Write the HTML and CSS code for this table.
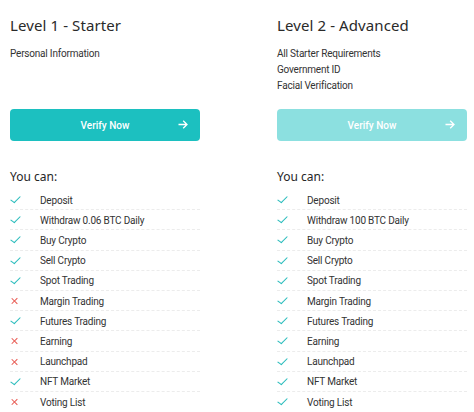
FILE: index.html
```html
<!DOCTYPE html>
<html>
<head>
<meta charset="utf-8">
<link rel="stylesheet" href="styles.css">
</head>
<body>
<div class="page">
  <section class="level">
    <h2 class="title">Level 1 - Starter</h2>
    <ul class="reqs">
      <li>Personal Information</li>
    </ul>
    <button class="verify">Verify Now
      <svg class="arrow" width="10" height="9" viewBox="0 0 10 9"><path d="M0.5 4.5H9M5.2 0.8L9 4.5L5.2 8.2" fill="none" stroke="#fff" stroke-width="1.3"/></svg>
    </button>
    <div class="can">You can:</div>
    <ul class="perms">
      <li><span class="ic ok"></span>Deposit</li>
      <li><span class="ic ok"></span>Withdraw 0.06 BTC Daily</li>
      <li><span class="ic ok"></span>Buy Crypto</li>
      <li><span class="ic ok"></span>Sell Crypto</li>
      <li><span class="ic ok"></span>Spot Trading</li>
      <li><span class="ic no"></span>Margin Trading</li>
      <li><span class="ic ok"></span>Futures Trading</li>
      <li><span class="ic no"></span>Earning</li>
      <li><span class="ic no"></span>Launchpad</li>
      <li><span class="ic ok"></span>NFT Market</li>
      <li><span class="ic no"></span>Voting List</li>
    </ul>
  </section>
  <section class="level">
    <h2 class="title">Level 2 - Advanced</h2>
    <ul class="reqs">
      <li>All Starter Requirements</li>
      <li>Government ID</li>
      <li>Facial Verification</li>
    </ul>
    <button class="verify disabled">Verify Now
      <svg class="arrow" width="10" height="9" viewBox="0 0 10 9"><path d="M0.5 4.5H9M5.2 0.8L9 4.5L5.2 8.2" fill="none" stroke="#fff" stroke-width="1.3"/></svg>
    </button>
    <div class="can">You can:</div>
    <ul class="perms">
      <li><span class="ic ok"></span>Deposit</li>
      <li><span class="ic ok"></span>Withdraw 100 BTC Daily</li>
      <li><span class="ic ok"></span>Buy Crypto</li>
      <li><span class="ic ok"></span>Sell Crypto</li>
      <li><span class="ic ok"></span>Spot Trading</li>
      <li><span class="ic ok"></span>Margin Trading</li>
      <li><span class="ic ok"></span>Futures Trading</li>
      <li><span class="ic ok"></span>Earning</li>
      <li><span class="ic ok"></span>Launchpad</li>
      <li><span class="ic ok"></span>NFT Market</li>
      <li><span class="ic ok"></span>Voting List</li>
    </ul>
  </section>
</div>
</body>
</html>
```
FILE: styles.css
```css
* { box-sizing: border-box; }
html, body { margin: 0; padding: 0; background: #fff; }
body { font-family: Roboto, "Noto Sans", sans-serif; color: #2c2c2c; }
.page {
  display: grid;
  grid-template-columns: 190px 190px;
  column-gap: 77px;
  padding: 15px 0 0 10px;
}
.level { display: flex; flex-direction: column; }
.title {
  margin: 0;
  font-family: "Noto Sans", sans-serif;
  font-weight: 400;
  font-size: 15px;
  line-height: 20px;
  color: #2a2a2a;
  letter-spacing: 0.1px;
}
.reqs {
  list-style: none;
  margin: 11px 0 0;
  padding: 0;
  height: 63px;
}
.reqs li {
  font-size: 10px;
  line-height: 16px;
  color: #333;
  letter-spacing: -0.2px;
}
.verify {
  position: relative;
  display: flex;
  align-items: center;
  justify-content: center;
  height: 32px;
  width: 190px;
  border: 0;
  border-radius: 4px;
  background: #1cc0c0;
  color: #fff;
  font-family: inherit;
  font-size: 10px;
  font-weight: 500;
  padding: 0;
  margin: 0;
}
.verify.disabled { background: #8ce0e0; }
.verify .arrow { position: absolute; right: 12px; top: 11px; }
.can {
  margin-top: 27px;
  font-family: "Noto Sans", sans-serif;
  font-size: 12px;
  line-height: 18px;
  color: #262626;
}
.perms {
  list-style: none;
  margin: 4px 0 0;
  padding: 0;
}
.perms li {
  display: flex;
  align-items: center;
  height: 20.2px;
  font-size: 10px;
  color: #333;
  letter-spacing: -0.2px;
  padding-top: 1px;
  border-bottom: 1px dashed #ececec;
}
.perms li:last-child { border-bottom: 0; }
.ic { width: 30px; height: 10px; flex: none; position: relative; }
.ic.ok::after {
  content: "";
  position: absolute;
  top: -1px;
  width: 4px;
  height: 8px;
  border-right: 1.3px solid #2dbdbd;
  border-bottom: 1.3px solid #2dbdbd;
  transform: rotate(45deg) skewY(-10deg);
  left: 3px;
}
.ic.no::before, .ic.no::after {
  content: "";
  position: absolute;
  left: 4px;
  top: 1px;
  width: 1.2px;
  height: 8px;
  background: #e8574f;
  transform: rotate(45deg);
}
.ic.no::after { transform: rotate(-45deg); }
```
